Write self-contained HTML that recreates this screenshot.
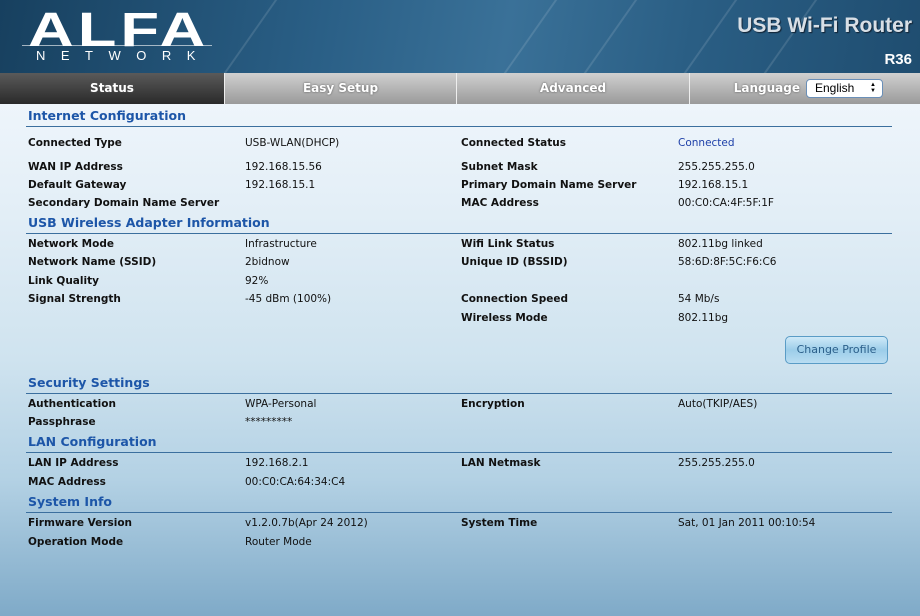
<!DOCTYPE html>
<html><head><meta charset="utf-8"><style>
*{margin:0;padding:0;box-sizing:border-box}
body{width:920px;height:616px;overflow:hidden;position:relative;font-family:"DejaVu Sans","Liberation Sans",sans-serif;font-size:10.5px;color:#111;
background:linear-gradient(#eef5fb 104px,#e4eff7 200px,#cfe3ef 360px,#b3d1e4 480px,#7faac8 616px)}
#hdr{position:absolute;left:0;top:0;width:920px;height:73px;background:linear-gradient(100deg,#17405f 0%,#2a5f86 35%,#3a7198 55%,#2a5e84 75%,#1f4d70 100%);overflow:hidden}
#hdr .s{position:absolute;top:-20px;height:140px;width:2px;background:rgba(255,255,255,.12);transform:rotate(35deg)}
.logo{position:absolute;left:28px;top:7px;color:#fff;font-family:"Liberation Sans",sans-serif;font-weight:900;font-size:48px;line-height:48px;letter-spacing:3px;transform:scaleX(1.32);transform-origin:left}
.net{position:absolute;left:36px;top:48px;color:#fff;font-family:"Liberation Sans",sans-serif;font-size:13px;line-height:16px;letter-spacing:15.5px}
.nline{position:absolute;left:22px;top:45px;width:190px;height:1px;background:rgba(255,255,255,.6)}
.ttl{position:absolute;right:8px;top:13px;color:#d8dfe6;font-family:"Liberation Sans",sans-serif;font-weight:bold;font-size:21px;line-height:26px;text-shadow:1px 1px 1px #123}
.r36{position:absolute;right:8px;top:51px;color:#fff;font-family:"Liberation Sans",sans-serif;font-weight:bold;font-size:15px;line-height:18px}
#nav{position:absolute;top:73px;left:0;width:920px;height:31px;background:linear-gradient(#d0d0d0,#9a9a9a)}
.tab{position:absolute;top:0;height:31px;line-height:31px;text-align:center;color:#fff;font-weight:bold;font-size:12px;text-shadow:0 0 2px #555;border-right:1px solid #eee}
.sel{position:absolute;left:806px;top:6px;width:77px;height:19px;background:#fff;border:1px solid #6a8fb8;border-radius:4px;font-family:"Liberation Sans",sans-serif;font-size:12px;line-height:16px;color:#000;padding:0 0 0 8px}
.sel b{position:absolute;right:6px;top:2px;font-size:6px;line-height:6px}
.h{position:absolute;left:28px;color:#1d56a8;font-weight:bold;font-size:12.5px;line-height:16px}
.ln{position:absolute;left:26px;width:866px;height:1px;background:#3b6f9e}
.t{position:absolute;white-space:nowrap;margin-top:1px}
.b{font-weight:bold}
.btn{position:absolute;left:785px;top:336px;width:103px;height:28px;border:1px solid #5a9cc6;border-radius:5px;background:linear-gradient(#cfe9f8,#9ccde9 50%,#b9ddf2);color:#2b5f8a;font-size:11px;text-align:center;line-height:26px}
</style></head><body>
<div id="hdr">
<div class="s" style="left:520px"></div><div class="s" style="left:600px"></div><div class="s" style="left:700px"></div><div class="s" style="left:780px"></div><div class="s" style="left:240px"></div>
<div class="logo">ALFA</div><div class="nline"></div><div class="net">NETWORK</div>
<div class="ttl">USB Wi-Fi Router</div><div class="r36">R36</div>
</div>
<div id="nav">
<div class="tab" style="left:0;width:225px;background:linear-gradient(#5a5a5a,#2a2a2a)">Status</div>
<div class="tab" style="left:225px;width:232px">Easy Setup</div>
<div class="tab" style="left:457px;width:233px">Advanced</div>
<div class="tab" style="left:690px;width:110px;border:none;text-align:right">Language</div>
<div class="sel">English<b>&#9650;<br>&#9660;</b></div>
</div>

<div class="h" style="top:108px">Internet Configuration</div><div class="ln" style="top:126px"></div>
<div class="h" style="top:215px">USB Wireless Adapter Information</div><div class="ln" style="top:233px"></div>
<div class="h" style="top:375px">Security Settings</div><div class="ln" style="top:393px"></div>
<div class="h" style="top:434px">LAN Configuration</div><div class="ln" style="top:452px"></div>
<div class="h" style="top:494px">System Info</div><div class="ln" style="top:512px"></div>

<div class="t b" style="left:28px;top:136px">Connected Type</div><div class="t" style="left:245px;top:136px">USB-WLAN(DHCP)</div>
<div class="t b" style="left:461px;top:136px">Connected Status</div><div class="t" style="left:678px;top:136px;color:#1d3fa8">Connected</div>
<div class="t b" style="left:28px;top:160px">WAN IP Address</div><div class="t" style="left:245px;top:160px">192.168.15.56</div>
<div class="t b" style="left:461px;top:160px">Subnet Mask</div><div class="t" style="left:678px;top:160px">255.255.255.0</div>
<div class="t b" style="left:28px;top:178px">Default Gateway</div><div class="t" style="left:245px;top:178px">192.168.15.1</div>
<div class="t b" style="left:461px;top:178px">Primary Domain Name Server</div><div class="t" style="left:678px;top:178px">192.168.15.1</div>
<div class="t b" style="left:28px;top:196px">Secondary Domain Name Server</div>
<div class="t b" style="left:461px;top:196px">MAC Address</div><div class="t" style="left:678px;top:196px">00:C0:CA:4F:5F:1F</div>

<div class="t b" style="left:28px;top:237px">Network Mode</div><div class="t" style="left:245px;top:237px">Infrastructure</div>
<div class="t b" style="left:461px;top:237px">Wifi Link Status</div><div class="t" style="left:678px;top:237px">802.11bg linked</div>
<div class="t b" style="left:28px;top:255px">Network Name (SSID)</div><div class="t" style="left:245px;top:255px">2bidnow</div>
<div class="t b" style="left:461px;top:255px">Unique ID (BSSID)</div><div class="t" style="left:678px;top:255px">58:6D:8F:5C:F6:C6</div>
<div class="t b" style="left:28px;top:274px">Link Quality</div><div class="t" style="left:245px;top:274px">92%</div>
<div class="t b" style="left:28px;top:292px">Signal Strength</div><div class="t" style="left:245px;top:292px">-45 dBm (100%)</div>
<div class="t b" style="left:461px;top:292px">Connection Speed</div><div class="t" style="left:678px;top:292px">54 Mb/s</div>
<div class="t b" style="left:461px;top:311px">Wireless Mode</div><div class="t" style="left:678px;top:311px">802.11bg</div>
<div class="btn">Change Profile</div>

<div class="t b" style="left:28px;top:397px">Authentication</div><div class="t" style="left:245px;top:397px">WPA-Personal</div>
<div class="t b" style="left:461px;top:397px">Encryption</div><div class="t" style="left:678px;top:397px">Auto(TKIP/AES)</div>
<div class="t b" style="left:28px;top:415px">Passphrase</div><div class="t" style="left:245px;top:415px">*********</div>

<div class="t b" style="left:28px;top:456px">LAN IP Address</div><div class="t" style="left:245px;top:456px">192.168.2.1</div>
<div class="t b" style="left:461px;top:456px">LAN Netmask</div><div class="t" style="left:678px;top:456px">255.255.255.0</div>
<div class="t b" style="left:28px;top:475px">MAC Address</div><div class="t" style="left:245px;top:475px">00:C0:CA:64:34:C4</div>

<div class="t b" style="left:28px;top:516px">Firmware Version</div><div class="t" style="left:245px;top:516px">v1.2.0.7b(Apr 24 2012)</div>
<div class="t b" style="left:461px;top:516px">System Time</div><div class="t" style="left:678px;top:516px">Sat, 01 Jan 2011 00:10:54</div>
<div class="t b" style="left:28px;top:535px">Operation Mode</div><div class="t" style="left:245px;top:535px">Router Mode</div>
</body></html>
